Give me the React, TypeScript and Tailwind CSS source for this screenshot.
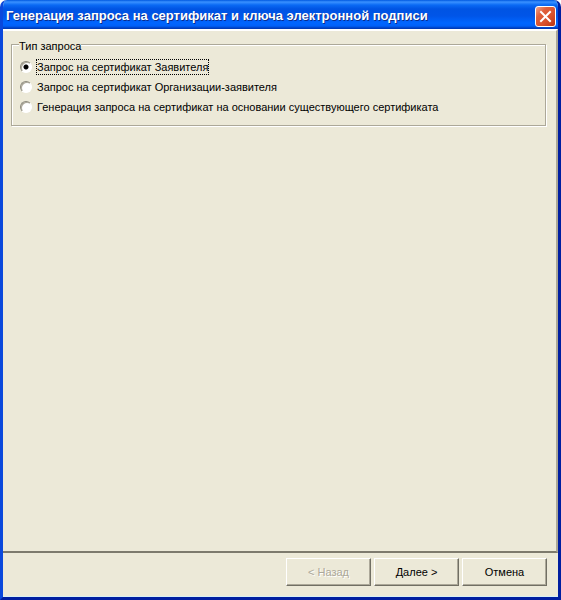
import { useState } from "react";

const requestTypes = [
  "Запрос на сертификат Заявителя",
  "Запрос на сертификат Организации-заявителя",
  "Генерация запроса на сертификат на основании существующего сертификата",
];

const buttonClass =
  "h-7 w-[85px] border border-t-white border-l-white border-r-[#716f64] border-b-[#716f64] bg-[#ece9d8] text-center shadow-[inset_-1px_-1px_0_#aca899] disabled:text-[#aca899] disabled:[text-shadow:1px_1px_0_#fff]";

export default function App() {
  const [selected, setSelected] = useState(0);

  return (
    <div className="min-h-screen bg-white font-['Liberation_Sans',Arial,sans-serif] text-[11px] leading-[14px] text-black">
      <main className="flex min-h-screen flex-col overflow-hidden rounded-t-[7px] border-x-3 border-b-3 border-l-[#0a48dc] border-r-[#001ea0] border-b-[#001ea0] bg-[#ece9d8]">
        <header className="flex h-[29px] shrink-0 items-center justify-between bg-[linear-gradient(to_bottom,#0058e0_0,#3a91ff_2px,#0a6af4_5px,#0054e3_9px,#0055e8_16px,#0066ff_23px,#0060f8_26px,#0040c0_28px,#0036b0_29px)] pt-[3px] pr-[2px] pl-[3px]">
          <h1 className="truncate text-[13px] leading-4 font-bold text-white [text-shadow:1px_1px_0_#0b2c8c]">
            Генерация запроса на сертификат и ключа электронной подписи
          </h1>
          <button
            type="button"
            aria-label="Закрыть"
            className="flex size-[21px] shrink-0 items-center justify-center rounded-[3px] border border-white bg-[linear-gradient(135deg,#f0a58d_0%,#e0603c_30%,#d8502c_65%,#b83410_100%)]"
          >
            <svg viewBox="0 0 13 13" className="size-[13px]" aria-hidden="true">
              <path d="M2 2L11 11M11 2L2 11" stroke="white" strokeWidth="2" strokeLinecap="square" />
            </svg>
          </button>
        </header>

        <form className="flex grow flex-col" onSubmit={(e) => e.preventDefault()}>
          <section className="grow border-t-2 border-r-2 border-b-2 border-t-white border-r-[#aca899] border-b-[#7d7a6d] px-2 pt-1">
            <fieldset className="mr-[2px] h-[91px] border border-[#aca899] px-2 shadow-[1px_1px_0_#fff,inset_1px_1px_0_#fff]">
              <legend className="-ml-px bg-[#ece9d8] pt-1">Тип запроса</legend>
              <div className="flex flex-col gap-1 pt-[6px]">
                {requestTypes.map((label, i) => (
                  <label key={label} className="flex h-4 items-center gap-1">
                    <input
                      type="radio"
                      name="request-type"
                      checked={selected === i}
                      onChange={() => setSelected(i)}
                      className="size-3 shrink-0 appearance-none rounded-full border border-t-[#8b887b] border-r-white border-b-white border-l-[#8b887b] bg-white shadow-[inset_1px_1px_0_#aca899] checked:bg-[radial-gradient(circle,#000_2px,#fff_3px)]"
                    />
                    <span
                      className={
                        selected === i
                          ? "border border-dotted border-black"
                          : "border border-transparent"
                      }
                    >
                      {label}
                    </span>
                  </label>
                ))}
              </div>
            </fieldset>
          </section>

          <footer className="flex justify-end gap-[3px] border-b border-[#d8f0f4] pt-[5px] pr-[11px] pb-[10px]">
            <button type="button" disabled className={buttonClass}>
              &lt; Назад
            </button>
            <button type="submit" className={buttonClass}>
              Далее &gt;
            </button>
            <button type="button" className={buttonClass}>
              Отмена
            </button>
          </footer>
        </form>
      </main>
    </div>
  );
}
